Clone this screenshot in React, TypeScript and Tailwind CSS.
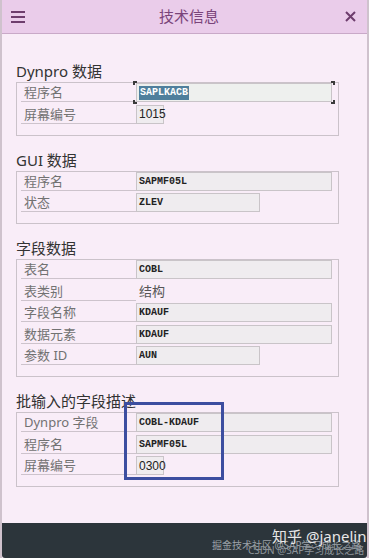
import React from 'react';

const cjk = { fontFamily: '"Noto Sans", "Noto Sans CJK SC", sans-serif' };
const sapFont = { fontFamily: '"Liberation Mono", monospace' };

type Row = { label: string; value?: string; width?: string; plain?: boolean; regular?: boolean; selected?: boolean };

function Label({ text }: { text: string }) {
  return (
    <div className="w-[115px] h-[19px] shrink-0 border-b border-[#cdc3cc] pl-[3px] text-[13px] leading-[19px] text-[#727272]" style={cjk}>
      {text}
    </div>
  );
}

function Corner({ className }: { className: string }) {
  return <div className={`absolute w-[4px] h-[4px] border-[#3a3a3a] ${className}`} />;
}

function Field({ row }: { row: Row }) {
  if (row.plain) {
    return (
      <div className="h-[19px] pl-[3px] text-[13px] leading-[19px] text-[#555]" style={cjk}>
        {row.value}
      </div>
    );
  }
  return (
    <div className={`relative h-[19px] border border-[#c9c4c8] pl-[2px] flex items-center ${row.width ?? 'w-[196px]'} ${row.selected ? 'bg-[#eef0ee]' : 'bg-[#efecef]'}`}>
      {row.selected ? (
        <>
          <span className="bg-[#4f7f9c] text-white text-[10px] font-bold px-[1px] leading-[14px]" style={sapFont}>{row.value}</span>
          <Corner className="-left-[4px] -top-[3px] border-l-2 border-t-2" />
          <Corner className="-left-[4px] -bottom-[3px] border-l-2 border-b-2" />
          <Corner className="-right-[4px] -top-[3px] border-r-2 border-t-2" />
          <Corner className="-right-[4px] -bottom-[3px] border-r-2 border-b-2" />
        </>
      ) : (
        <span className={`text-[#222] ${row.regular ? 'text-[12px]' : 'text-[10px] font-bold'}`} style={row.regular ? { fontFamily: '"Liberation Sans", sans-serif' } : sapFont}>
          {row.value}
        </span>
      )}
    </div>
  );
}

function Section({ title, rows, children }: { title: string; rows: Row[]; children?: React.ReactNode }) {
  return (
    <div className="relative">
      <div className="h-[20px] mb-[2px] text-[15px] leading-[20px] text-[#333]" style={cjk}>{title}</div>
      <div className="border border-[#cbc2ca] w-[323px] pl-[4px] pb-[11px] flex flex-col gap-[2.5px] -mt-px">
        {rows.map((r) => (
          <div key={r.label} className="flex items-start">
            <Label text={r.label} />
            <Field row={r} />
          </div>
        ))}
      </div>
      {children}
    </div>
  );
}

export default function App() {
  return (
    <div className="w-[369px] h-[558px] flex flex-col bg-[#f9edf8] border-x-2 border-[#cfc2cd] overflow-hidden">
      <div className="h-[34px] shrink-0 flex items-center justify-between px-[9px] bg-[#eaccea] border-b border-[#c9a9c8]">
        <svg width="14" height="12" viewBox="0 0 14 12">
          <rect x="0" y="0" width="14" height="2" fill="#6e3d6d" />
          <rect x="0" y="5" width="14" height="2" fill="#6e3d6d" />
          <rect x="0" y="10" width="14" height="2" fill="#6e3d6d" />
        </svg>
        <div className="text-[15px] text-[#7a447a] ml-[8px]" style={cjk}>技术信息</div>
        <svg width="11" height="11" viewBox="0 0 11 11" className="mr-[2px]">
          <path d="M1 1 L10 10 M10 1 L1 10" stroke="#6e3d6d" strokeWidth="2" />
        </svg>
      </div>

      <div className="flex-1 pl-[14px] pt-[27px] flex flex-col gap-[14px]">
        <Section
          title="Dynpro 数据"
          rows={[
            { label: '程序名', value: 'SAPLKACB', selected: true },
            { label: '屏幕编号', value: '1015', width: 'w-[28px]', regular: true },
          ]}
        />
        <Section
          title="GUI 数据"
          rows={[
            { label: '程序名', value: 'SAPMF05L' },
            { label: '状态', value: 'ZLEV', width: 'w-[124px]' },
          ]}
        />
        <Section
          title="字段数据"
          rows={[
            { label: '表名', value: 'COBL' },
            { label: '表类别', value: '结构', plain: true },
            { label: '字段名称', value: 'KDAUF' },
            { label: '数据元素', value: 'KDAUF' },
            { label: '参数 ID', value: 'AUN', width: 'w-[124px]' },
          ]}
        />
        <Section
          title="批输入的字段描述"
          rows={[
            { label: 'Dynpro 字段', value: 'COBL-KDAUF' },
            { label: '程序名', value: 'SAPMF05L' },
            { label: '屏幕编号', value: '0300', width: 'w-[28px]', regular: true },
          ]}
        >
          <div className="absolute left-[108px] top-[11px] w-[100px] h-[78px] border-[3px] border-[#3c4ea0]" />
        </Section>
      </div>

      <div className="relative h-[35px] shrink-0 bg-[#2c353b] rounded-b-[3px] whitespace-nowrap" style={cjk}>
        <div className="absolute left-[210px] top-[16px] text-[10px] leading-[13px] text-[#9aa0a6]">掘金技术社区 @SAP学习成长之路</div>
        <div className="absolute left-[246px] top-[20px] text-[10px] leading-[14px] text-[#8d949a]">CSDN @SAP学习成长之路</div>
        <div className="absolute left-[270px] top-[4px] text-[15px] leading-[18px] text-[#e8e8e8]">知乎 @janelin</div>
      </div>
    </div>
  );
}
